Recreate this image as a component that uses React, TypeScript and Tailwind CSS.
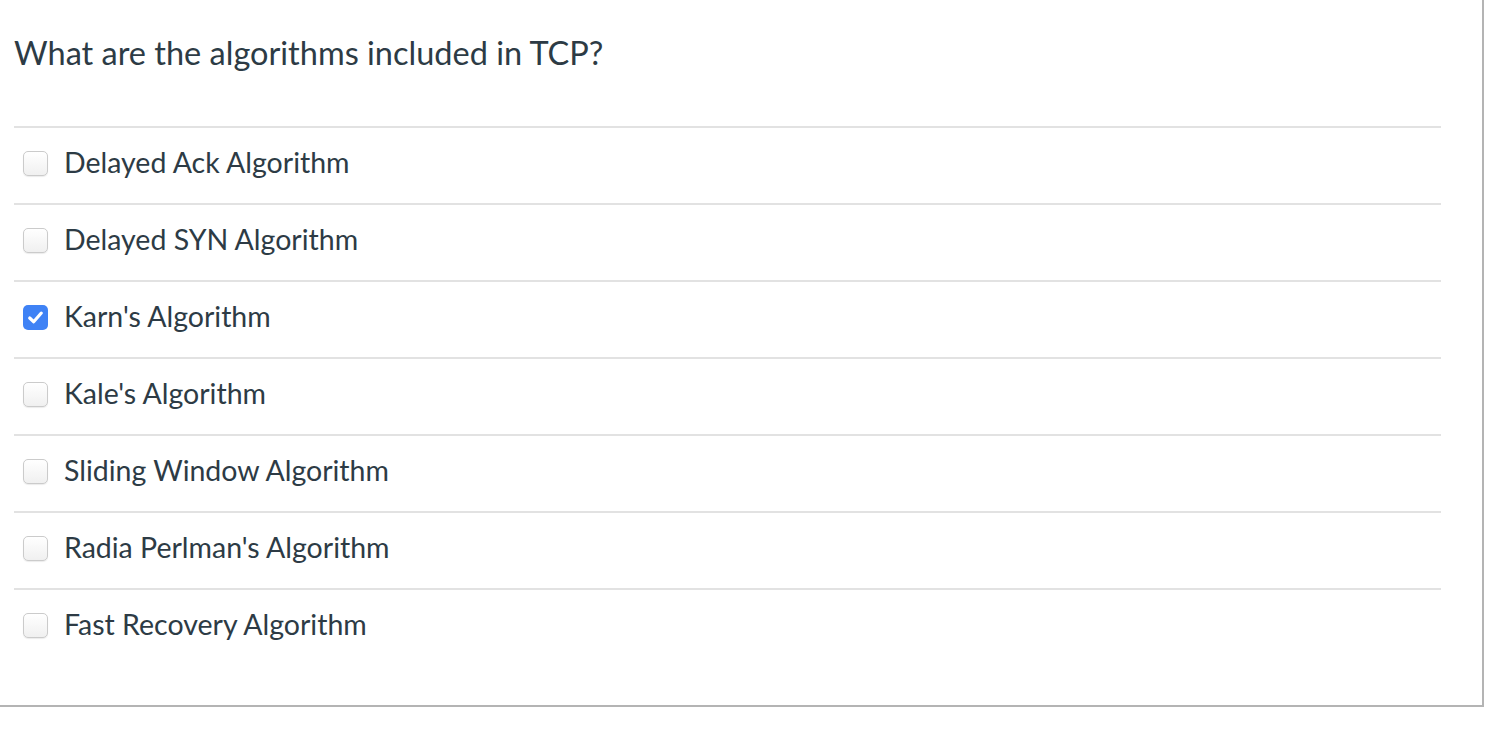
import React from "react";

const options = [
  { label: "Delayed Ack Algorithm", checked: false },
  { label: "Delayed SYN Algorithm", checked: false },
  { label: "Karn's Algorithm", checked: true },
  { label: "Kale's Algorithm", checked: false },
  { label: "Sliding Window Algorithm", checked: false },
  { label: "Radia Perlman's Algorithm", checked: false },
  { label: "Fast Recovery Algorithm", checked: false },
];

function Box({ checked }: { checked: boolean }) {
  if (checked) {
    return (
      <span className="mt-[3px] flex h-[25px] w-[25px] shrink-0 items-center justify-center rounded-[5px] bg-[#3f82f5]">
        <svg width="19" height="19" viewBox="0 0 18 18" fill="none">
          <path d="M3.5 9.5 L7.3 13 L14.5 4.8" stroke="white" strokeWidth="3" strokeLinecap="round" strokeLinejoin="round" />
        </svg>
      </span>
    );
  }
  return (
    <span className="mt-[3px] block h-[25px] w-[25px] shrink-0 rounded-[5px] border border-[#cbcbcb] bg-gradient-to-b from-white to-[#f0f0f0] shadow-[0_1px_1px_rgba(0,0,0,0.08)]" />
  );
}

export default function App() {
  return (
    <div className="bg-white" style={{ fontFamily: "Lato, 'Noto Sans', sans-serif" }}>
      <div className="h-[707px] w-[1484px] border-b-2 border-r-2 border-[#b4b4b4] text-[#2d3b45]">
        <div className="flex h-[126px] items-start px-[14px] pt-[31px]">
          <h1 className="text-[32.5px] leading-[44px]">What are the algorithms included in TCP?</h1>
        </div>
        <div className="ml-[14px] w-[1427px]">
          {options.map((o, i) => (
            <div
              key={i}
              className="flex h-[77px] items-center gap-[16px] border-t-2 border-[#e2e2e2] pl-[9px] pb-[7px]"
            >
              <Box checked={o.checked} />
              <span className="text-[28.5px] leading-[34px]">{o.label}</span>
            </div>
          ))}
        </div>
      </div>
    </div>
  );
}
